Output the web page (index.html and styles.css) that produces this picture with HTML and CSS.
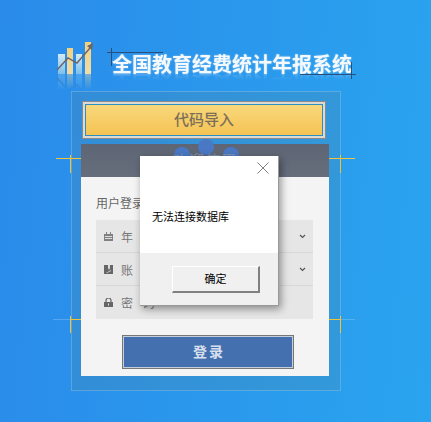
FILE: index.html
```html
<!DOCTYPE html>
<html lang="zh-CN">
<head>
    <meta charset="UTF-8">
    <title>全国教育经费统计年报系统</title>
    <link rel="stylesheet" href="styles.css">
</head>
<body>
    <div class="page">
        <!-- logo and system name -->
        <div class="brand">
            <svg class="brand-logo" width="38" height="32" viewBox="0 0 38 32">
                <defs>
                    <linearGradient id="barBlue" x1="0" y1="0" x2="0" y2="1">
                        <stop offset="0" stop-color="#d5e9f3"/>
                        <stop offset="1" stop-color="#7dc0ea"/>
                    </linearGradient>
                    <linearGradient id="barGold" x1="0" y1="0" x2="0" y2="1">
                        <stop offset="0" stop-color="#f2d17f"/>
                        <stop offset="1" stop-color="#f0dca6"/>
                    </linearGradient>
                </defs>
                <rect x="2" y="12" width="7" height="20" fill="url(#barBlue)"/>
                <rect x="11" y="6" width="6" height="26" fill="url(#barGold)"/>
                <rect x="20" y="12" width="6" height="20" fill="url(#barBlue)"/>
                <rect x="29" y="0" width="6" height="32" fill="url(#barGold)"/>
                <path d="M1 28 L12 16 L21 21 L34 6" fill="none" stroke="#6b6468" stroke-width="1.4"/>
                <path d="M31 4 L37 1 L36 8 Z" fill="#6b6468"/>
            </svg>
            <h1 class="brand-title">全国教育经费统计年报系统</h1>
        </div>

        <!-- marks around the title -->
        <span class="mark mark-dark mark-title-a"></span>
        <span class="mark mark-dark mark-title-b"></span>

        <div class="panel">
            <button class="import-btn" type="button">代码导入</button>

            <div class="login-card">
                <div class="login-head">
                    <span class="dot dot-left"></span>
                    <span class="dot dot-mid"></span>
                    <span class="dot dot-right"></span>
                    <span class="login-head-text">欢迎使用</span>
                </div>
                <div class="login-body">
                    <div class="login-title">用户登录</div>
                    <div class="field">
                        <svg class="field-icon" width="9" height="9" viewBox="0 0 9 9">
                            <path d="M0 2h9v7H0z" fill="#808080"/>
                            <path d="M2 0h1v3H2zM6 0h1v3H6z" fill="#808080"/>
                            <path d="M1 4h7v1H1zM1 6h7v1H1z" fill="#ddd"/>
                        </svg>
                        <span class="field-label">年 度</span>
                        <svg class="field-arrow" width="7" height="5" viewBox="0 0 7 5"><path d="M1 1l2.5 2.5L6 1" fill="none" stroke="#555" stroke-width="1.2"/></svg>
                    </div>
                    <div class="field">
                        <svg class="field-icon" width="9" height="9" viewBox="0 0 9 9">
                            <path d="M0 0h9v9H0z" fill="#666"/>
                            <path d="M4 0h2v3L5 5 4 3zM2 8l5-3v1L3 8z" fill="#ddd"/>
                        </svg>
                        <span class="field-label">账 号</span>
                        <svg class="field-arrow" width="7" height="5" viewBox="0 0 7 5"><path d="M1 1l2.5 2.5L6 1" fill="none" stroke="#555" stroke-width="1.2"/></svg>
                    </div>
                    <div class="field field-last">
                        <svg class="field-icon" width="9" height="9" viewBox="0 0 9 9">
                            <path d="M2 4V2.5a2.5 2.5 0 0 1 5 0V4" fill="none" stroke="#666" stroke-width="1.2"/>
                            <path d="M0 4h9v5H0z" fill="#666"/>
                            <path d="M4 5.5h1v2H4z" fill="#ddd"/>
                        </svg>
                        <span class="field-label">密 码</span>
                    </div>
                    <button class="login-btn" type="button">登录</button>
                </div>
            </div>
        </div>

        <span class="mark mark-gold mark-tl"></span>
        <span class="mark mark-gold mark-tr"></span>
        <span class="mark mark-gold mark-bl"></span>
        <span class="mark mark-gold mark-br"></span>

        <!-- error dialog -->
        <div class="dialog">
            <div class="dialog-main">
                <svg class="dialog-close" width="12" height="12" viewBox="0 0 12 12">
                    <path d="M0.5 0.5L11.5 11.5M11.5 0.5L0.5 11.5" stroke="#808080" stroke-width="1" fill="none"/>
                </svg>
                <p class="dialog-text">无法连接数据库</p>
            </div>
            <div class="dialog-foot">
                <button class="dialog-btn" type="button">确定</button>
            </div>
        </div>
    </div>
</body>
</html>
```

FILE: styles.css
```css
* {
    box-sizing: border-box;
}

body {
    margin: 0;
    font-family: "Noto Sans CJK SC", "Liberation Sans", sans-serif;
}

button {
    font-family: inherit;
    margin: 0;
}

.page {
    position: relative;
    width: 431px;
    height: 422px;
    overflow: hidden;
    padding-top: 42px;
    background: linear-gradient(95deg, #2a8bea 0%, #2aa4ef 100%);
}

.brand {
    display: flex;
    align-items: flex-start;
    height: 49px;
    padding-left: 56px;
}

.brand-logo {
    display: block;
    -webkit-box-reflect: below 0 linear-gradient(transparent 50%, rgba(255, 255, 255, 0.4));
}

.brand-title {
    margin: 8px 0 0 18px;
    font-size: 20px;
    line-height: 28px;
    font-weight: 700;
    color: #f4f9fd;
    white-space: nowrap;
    text-shadow: 0 0 2px rgba(255, 255, 255, 0.5);
    -webkit-box-reflect: below -9px linear-gradient(transparent 60%, rgba(255, 255, 255, 0.3));
}

.panel {
    width: 270px;
    height: 300px;
    margin-left: 71px;
    padding: 9px 10px 14px;
    background: rgba(90, 130, 140, 0.2);
    border: 1px solid rgba(255, 255, 255, 0.2);
}

.import-btn {
    display: block;
    width: 244px;
    height: 38px;
    padding: 0 0 3px;
    border: 1px solid #8a8a8a;
    background: linear-gradient(180deg, #f8da80, #f5c14f);
    box-shadow: inset 0 0 0 2px #dcdad2, inset 0 0 0 3px #2a90c4;
    color: #7c6f58;
    font-size: 15px;
    font-weight: 500;
}

.login-card {
    width: 248px;
    margin: 5px 0 0 -1px;
}

.login-head {
    position: relative;
    height: 33px;
    padding-top: 4px;
    background: linear-gradient(180deg, #5e6675, #666e7c);
    text-align: center;
    color: #7e8fae;
    font-size: 15px;
    line-height: 24px;
}

.login-head-text {
    position: relative;
    letter-spacing: 1px;
}

.dot {
    position: absolute;
    width: 16px;
    height: 16px;
    border-radius: 50%;
    background: #4a78c4;
}

.dot-left {
    left: 93px;
    top: 3px;
}

.dot-mid {
    left: 117px;
    top: -5px;
}

.dot-right {
    left: 142px;
    top: 3px;
}

.login-body {
    height: 199px;
    padding: 17px 15px 0;
    background: #f4f4f4;
}

.login-title {
    height: 26px;
    font-size: 12px;
    line-height: 18px;
    color: #666;
}

.field {
    display: flex;
    align-items: center;
    width: 217px;
    height: 33px;
    padding: 0 7px 0 8px;
    background: #e6e6e6;
    border-bottom: 1px solid #d8d8d8;
    color: #777;
    font-size: 12px;
}

.field-last {
    border-bottom: 0;
}

.field-icon {
    display: block;
    flex: none;
}

.field-label {
    margin-left: 8px;
    word-spacing: 7px;
}

.field-arrow {
    margin-left: auto;
}

.login-btn {
    display: block;
    width: 172px;
    height: 34px;
    margin: 16px 0 0 26px;
    padding: 0 0 3px 2px;
    border: 1px solid #777;
    background: #4470b0;
    box-shadow: inset 0 0 0 1px #c4cedd;
    color: #d8e0ee;
    font-size: 14px;
    font-weight: 700;
    letter-spacing: 2px;
}

/* small cross marks */
.mark {
    position: absolute;
    display: block;
}

.mark::before,
.mark::after {
    content: "";
    position: absolute;
}

.mark-dark::before,
.mark-dark::after {
    background: #2a4f78;
}

.mark-gold::before,
.mark-gold::after {
    background: #f0c33a;
}

.mark::before {
    left: 0;
    right: 0;
    top: var(--y);
    height: 1px;
}

.mark::after {
    top: 0;
    bottom: 0;
    left: var(--x);
    width: 1px;
}

.mark-title-a {
    left: 107px;
    top: 48px;
    width: 56px;
    height: 18px;
    --x: 4px;
    --y: 4px;
}

.mark-title-b {
    left: 300px;
    top: 62px;
    width: 56px;
    height: 17px;
    --x: 51px;
    --y: 12px;
}

.mark-tl {
    left: 56px;
    top: 155px;
    width: 25px;
    height: 18px;
    --x: 14px;
    --y: 3px;
}

.mark-tr {
    left: 329px;
    top: 155px;
    width: 26px;
    height: 18px;
    --x: 11px;
    --y: 3px;
}

.mark-bl {
    left: 53px;
    top: 316px;
    width: 28px;
    height: 17px;
    --x: 17px;
    --y: 3px;
}

.mark-br {
    left: 329px;
    top: 316px;
    width: 26px;
    height: 17px;
    --x: 11px;
    --y: 3px;
}

.mark-bl::before {
    background: linear-gradient(90deg, rgba(255, 255, 255, 0.2) 60%, #f0c33a 60%);
}

.mark-br::before {
    background: linear-gradient(90deg, #f0c33a 42%, rgba(255, 255, 255, 0.2) 42%);
}

.dialog {
    position: absolute;
    left: 140px;
    top: 156px;
    width: 139px;
    height: 150px;
    display: flex;
    flex-direction: column;
    background: #fff;
    border-right: 1px solid #999;
    border-bottom: 1px solid #999;
    box-shadow: 2px 3px 8px rgba(0, 0, 0, 0.4);
}

.dialog-main {
    position: relative;
    height: 97px;
    padding: 52px 0 0 12px;
}

.dialog-close {
    position: absolute;
    right: 9px;
    top: 6px;
}

.dialog-text {
    margin: 0;
    font-size: 11px;
    line-height: 16px;
    color: #000;
}

.dialog-foot {
    flex: 1;
    padding: 13px 0 0 32px;
    background: #f0f0f0;
}

.dialog-btn {
    display: block;
    width: 88px;
    height: 27px;
    padding: 0 0 2px;
    background: #f0f0f0;
    border: 1px solid #fff;
    border-right: 2px solid #808080;
    border-bottom: 2px solid #808080;
    color: #000;
    font-size: 11px;
}
```
